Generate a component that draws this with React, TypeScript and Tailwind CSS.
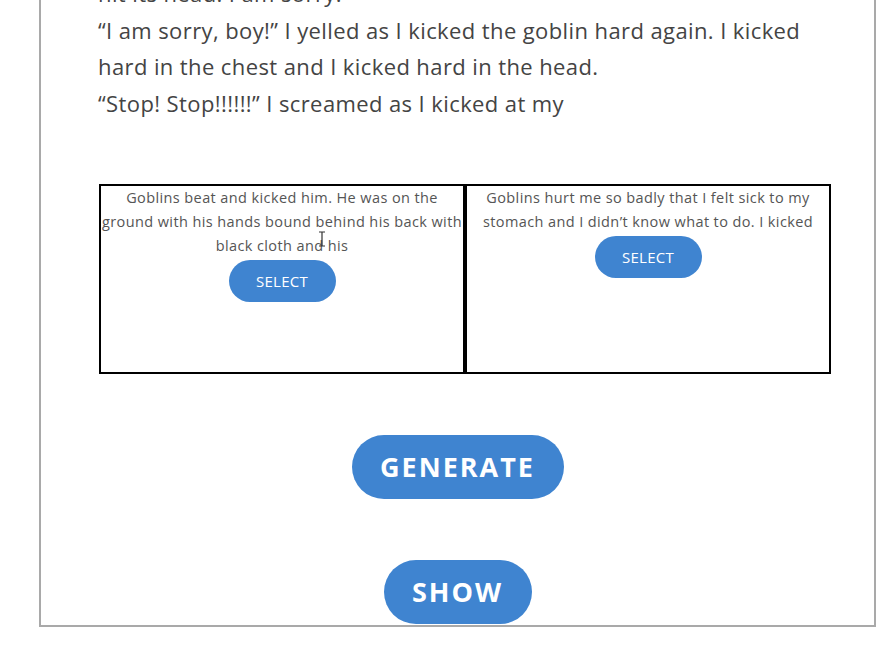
import React from 'react'

const font = { fontFamily: '"Open Sans", "Liberation Sans", sans-serif' }

function SelectButton() {
  return (
    <button className="mx-auto mt-[2px] flex h-[42px] w-[107px] items-center justify-center rounded-full bg-[#3f84d0] text-[15px] tracking-[0.3px] text-white">
      SELECT
    </button>
  )
}

function Choice({ lines }: { lines: string[] }) {
  return (
    <div className="h-[190px] w-[366px] border-2 border-black text-center">
      <p className="whitespace-nowrap text-[14.5px] leading-[24px] tracking-[0.4px] text-[#555]">
        {lines.map((l, i) => (
          <span key={i} className="block">{l}</span>
        ))}
      </p>
      <SelectButton />
    </div>
  )
}

export default function App() {
  return (
    <div className="h-[648px] w-[895px] overflow-hidden bg-white" style={font}>
      <div className="ml-[39px] h-[627px] w-[837px] overflow-hidden border-x-2 border-b-2 border-[#a9a9a9]">
        <div className="-mt-[25px] pl-[57px] text-[22px] leading-[36.5px] tracking-[0.4px] text-[#444]">
          <p className="whitespace-nowrap">hit its head. I am sorry.</p>
          <p className="whitespace-nowrap">
            “I am sorry, boy!” I yelled as I kicked the goblin hard again. I kicked
            <br />
            hard in the chest and I kicked hard in the head.
          </p>
          <p className="whitespace-nowrap">“Stop! Stop!!!!!!” I screamed as I kicked at my</p>
        </div>

        <div className="relative mt-[63px] ml-[58px] flex">
          <Choice
            lines={[
              'Goblins beat and kicked him. He was on the',
              'ground with his hands bound behind his back with',
              'black cloth and his',
            ]}
          />
          <Choice
            lines={[
              'Goblins hurt me so badly that I felt sick to my',
              'stomach and I didn’t know what to do. I kicked',
            ]}
          />
          {/* text cursor */}
          <svg className="absolute left-[219px] top-[47px]" width="8" height="16" viewBox="0 0 8 16">
            <path d="M1 1h6M4 1v14M1 15h6" stroke="#333" strokeWidth="1.2" fill="none" />
          </svg>
        </div>

        <div className="mt-[61px] flex flex-col items-center gap-[61px]">
          <button className="flex h-[64px] w-[212px] shrink-0 items-center justify-center rounded-full bg-[#3f84d0] text-[27px] font-bold tracking-[2px] text-white">
            GENERATE
          </button>
          <button className="flex h-[64px] w-[148px] shrink-0 items-center justify-center rounded-full bg-[#3f84d0] text-[27px] font-bold tracking-[2px] text-white">
            SHOW
          </button>
        </div>
      </div>
    </div>
  )
}
